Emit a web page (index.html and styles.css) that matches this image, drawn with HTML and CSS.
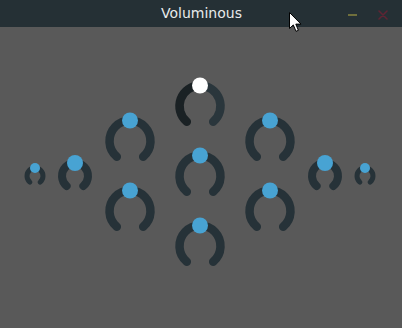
FILE: index.html
```html
<!DOCTYPE html>
<html>
<head>
<meta charset="utf-8">
<link rel="stylesheet" href="styles.css">
</head>
<body>
<div class="window">
  <div class="titlebar">
    <div class="spacer"></div>
    <div class="title">Voluminous</div>
    <div class="controls">
      <span class="btn-min"></span>
      <svg class="btn-close" width="10" height="10" viewBox="0 0 10 10"><path d="M1 1 L9 9 M9 1 L1 9" stroke="#5e2434" stroke-width="1.6" stroke-linecap="round"/></svg>
    </div>
  </div>
  <div class="stage">
    <div class="col col-s">
      <svg class="knob-s" viewBox="-13 -13 26 26"><path class="track" d="M -5.14 6.13 A 8 8 0 1 1 5.14 6.13" stroke-width="5"/><circle class="handle" cx="0" cy="-8" r="5"/></svg>
    </div>
    <div class="col col-m">
      <svg class="knob-m" viewBox="-21 -21 42 42"><path class="track" d="M -8.36 9.96 A 13 13 0 1 1 8.36 9.96" stroke-width="8"/><circle class="handle" cx="0" cy="-13" r="8"/></svg>
    </div>
    <div class="col col-l">
      <svg class="knob-l" viewBox="-29 -29 58 58"><path class="track" d="M -13.18 15.7 A 20.5 20.5 0 1 1 13.18 15.7" stroke-width="8.5"/><circle class="handle" cx="0" cy="-20.5" r="8"/></svg>
      <svg class="knob-l" viewBox="-29 -29 58 58"><path class="track" d="M -13.18 15.7 A 20.5 20.5 0 1 1 13.18 15.7" stroke-width="8.5"/><circle class="handle" cx="0" cy="-20.5" r="8"/></svg>
    </div>
    <div class="col col-l">
      <svg class="knob-l" viewBox="-29 -29 58 58"><path class="track-hi" d="M 0 -20.5 A 20.5 20.5 0 0 1 13.18 15.7" stroke-width="8.5"/><path class="fill" d="M -13.18 15.7 A 20.5 20.5 0 0 1 0 -20.5" stroke-width="8.5"/><circle class="handle-active" cx="0" cy="-20.5" r="8"/></svg>
      <svg class="knob-l" viewBox="-29 -29 58 58"><path class="track" d="M -13.18 15.7 A 20.5 20.5 0 1 1 13.18 15.7" stroke-width="8.5"/><circle class="handle" cx="0" cy="-20.5" r="8"/></svg>
      <svg class="knob-l" viewBox="-29 -29 58 58"><path class="track" d="M -13.18 15.7 A 20.5 20.5 0 1 1 13.18 15.7" stroke-width="8.5"/><circle class="handle" cx="0" cy="-20.5" r="8"/></svg>
    </div>
    <div class="col col-l">
      <svg class="knob-l" viewBox="-29 -29 58 58"><path class="track" d="M -13.18 15.7 A 20.5 20.5 0 1 1 13.18 15.7" stroke-width="8.5"/><circle class="handle" cx="0" cy="-20.5" r="8"/></svg>
      <svg class="knob-l" viewBox="-29 -29 58 58"><path class="track" d="M -13.18 15.7 A 20.5 20.5 0 1 1 13.18 15.7" stroke-width="8.5"/><circle class="handle" cx="0" cy="-20.5" r="8"/></svg>
    </div>
    <div class="col col-m">
      <svg class="knob-m" viewBox="-21 -21 42 42"><path class="track" d="M -8.36 9.96 A 13 13 0 1 1 8.36 9.96" stroke-width="8"/><circle class="handle" cx="0" cy="-13" r="8"/></svg>
    </div>
    <div class="col col-s">
      <svg class="knob-s" viewBox="-13 -13 26 26"><path class="track" d="M -5.14 6.13 A 8 8 0 1 1 5.14 6.13" stroke-width="5"/><circle class="handle" cx="0" cy="-8" r="5"/></svg>
    </div>
  </div>
  <svg class="cursor" width="14" height="21" viewBox="0 0 14 21"><path d="M0.5 0.5 L0.5 16.5 L4.3 12.9 L7 19.3 L9.4 18.3 L6.8 12.1 L12 12.1 Z" fill="#ffffff" stroke="#000000" stroke-width="1" stroke-linejoin="round"/></svg>
</div>
</body>
</html>
```
FILE: styles.css
```css
html, body {
  margin: 0;
  padding: 0;
}
body {
  width: 402px;
  height: 328px;
  overflow: hidden;
  background: #595959;
  font-family: "DejaVu Sans", "Noto Sans", sans-serif;
}
.window {
  position: relative;
  width: 402px;
  height: 328px;
  display: flex;
  flex-direction: column;
}
.titlebar {
  height: 27px;
  flex: 0 0 27px;
  background: #253035;
  display: grid;
  grid-template-columns: 1fr auto 1fr;
  align-items: center;
}
.title {
  color: #e8eaeb;
  font-size: 14px;
  line-height: 27px;
  padding-left: 1px;
}
.controls {
  justify-self: end;
  display: flex;
  align-items: center;
  gap: 21px;
  padding-right: 14px;
  padding-top: 2px;
}
.btn-min {
  display: block;
  width: 9px;
  height: 2px;
  background: #6f6f3c;
}
.btn-close {
  display: block;
}
.stage {
  flex: 1;
  display: flex;
  justify-content: center;
  align-items: center;
  padding-right: 2px;
  padding-bottom: 3px;
}
.col {
  display: flex;
  flex-direction: column;
  align-items: center;
  gap: 12px;
  flex-shrink: 0;
}
.col-s { width: 40px; }
.col-m { width: 40px; }
.col-l { width: 70px; }
.knob-s { width: 26px; height: 26px; flex-shrink: 0; }
.knob-m { width: 42px; height: 42px; flex-shrink: 0; }
.knob-l { width: 58px; height: 58px; flex-shrink: 0; }
.track {
  fill: none;
  stroke: #263238;
  stroke-linecap: round;
}
.track-hi {
  fill: none;
  stroke: #2a363c;
  stroke-linecap: round;
}
.fill {
  fill: none;
  stroke: #1a2124;
  stroke-linecap: round;
}
.handle { fill: #48a3d3; }
.handle-active { fill: #ffffff; }
.cursor {
  position: absolute;
  left: 289px;
  top: 12px;
}
```
